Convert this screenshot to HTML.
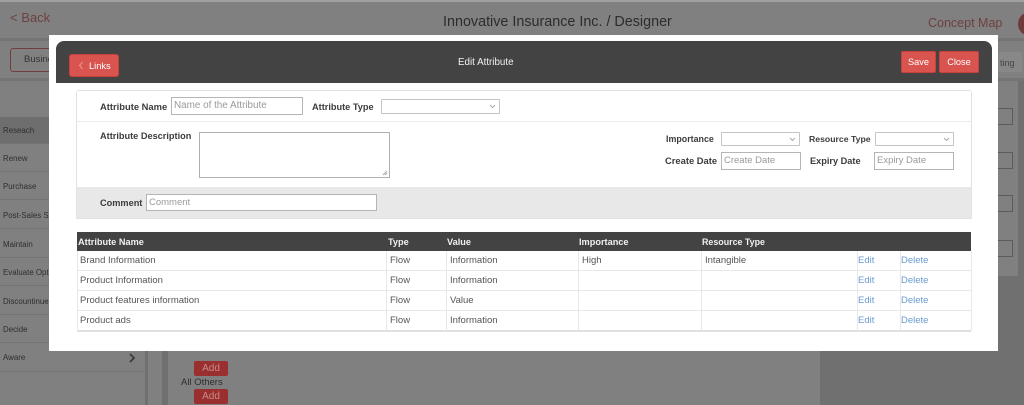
<!DOCTYPE html>
<html><head><meta charset="utf-8"><style>
html,body{margin:0;padding:0;width:1024px;height:405px;overflow:hidden;background:#808080}
body{position:relative;font-family:"Liberation Sans",sans-serif;color:#444}
div,span,a{position:absolute;box-sizing:border-box;white-space:nowrap}
.t{font-size:9.5px;line-height:12px;color:#555}
.l{font-size:9.2px;line-height:12px;font-weight:bold;color:#3c3c3c}
.h{font-size:9.2px;line-height:12px;font-weight:bold;color:#f0f0f0}
.e{font-size:9.5px;line-height:12px;color:#6a9bd0}
.i{background:#fff;border:1px solid #b5b5b5;font-size:9.5px;line-height:15px;color:#9a9a9a;padding-left:2px}
.s{background:#fff;border:1px solid #c4c4c4;border-radius:1px}
.s svg{position:absolute;right:3px;top:4px}
.v{background:#e8e8e8;width:1px}
.r{background:#e8e8e8;height:1px;left:77px;width:894px}
.m{font-size:7.9px;line-height:12px;color:#2e2e2e;left:3px}
.sl{left:0;width:145px;height:1px;background:#747474}
.bx{left:998px;width:15px;height:17px;border:1px solid #5c5c5c;background:#808080;border-left:0}
.ad{left:194px;width:34px;height:15px;background:#9a2f2f;border-radius:2px;color:#c98a8a;font-size:10px;line-height:15px;text-align:center}
</style></head><body>
<div style="left:0;top:0;width:1024px;height:2px;background:#a0a0a0"></div>
<div style="left:0;top:38px;width:1024px;height:3px;background:#747474"></div>
<div style="left:0;top:78px;width:1024px;height:3px;background:#747474"></div>
<div style="left:0;top:117px;width:145px;height:26px;background:#6e6e6e"></div>
<div style="left:145px;top:81px;width:3px;height:324px;background:#707070"></div>
<div style="left:162px;top:81px;width:6px;height:324px;background:#707070"></div>
<div style="left:820px;top:351px;width:204px;height:54px;background:#707070"></div>
<div style="left:998px;top:276px;width:26px;height:75px;background:#707070"></div>
<div style="left:1018px;top:81px;width:6px;height:195px;background:#707070"></div>
<div style="left:998px;top:52px;width:24px;height:20px;background:#888"></div>

<span style="left:10px;top:9px;font-size:13px;line-height:17px;color:#6e3f3f">&lt; Back</span>
<span style="left:443px;top:13px;font-size:14.35px;line-height:18px;color:#2c2c2c">Innovative Insurance Inc. / Designer</span>
<span style="left:928px;top:15px;font-size:12.5px;line-height:16px;color:#6e3f3f">Concept Map</span>
<div style="left:1018px;top:12px;width:24px;height:24px;border-radius:50%;background:#6e3a3a"></div>
<div style="left:10px;top:48px;width:50px;height:24px;border:1px solid #6e3f3f;border-radius:3px"></div>
<span style="left:24px;top:54px;font-size:9.5px;line-height:12px;color:#333">Business</span>
<span style="left:1000px;top:57px;font-size:9px;line-height:12px;color:#444">ting</span>

<span class="m" style="top:125px">Reseach</span><span class="m" style="top:153px">Renew</span>
<span class="m" style="top:181px">Purchase</span><span class="m" style="top:210px">Post-Sales Support</span>
<span class="m" style="top:239px">Maintain</span><span class="m" style="top:267px">Evaluate Options</span>
<span class="m" style="top:296px">Discountinue</span><span class="m" style="top:324px">Decide</span>
<span class="m" style="top:352px">Aware</span>
<div class="sl" style="top:143px"></div><div class="sl" style="top:171px"></div><div class="sl" style="top:199px"></div><div class="sl" style="top:228px"></div><div class="sl" style="top:257px"></div><div class="sl" style="top:285px"></div><div class="sl" style="top:314px"></div><div class="sl" style="top:342px"></div><div class="sl" style="top:371px"></div>
<svg style="position:absolute;left:128px;top:353px" width="8" height="10"><path d="M2 1l4 4-4 4" fill="none" stroke="#3a3a3a" stroke-width="1.8"/></svg>

<div class="bx" style="top:108px"></div><div class="bx" style="top:152px"></div><div class="bx" style="top:195px"></div><div class="bx" style="top:240px"></div>

<span style="left:198px;top:343px;font-size:9.5px;line-height:12px;color:#333">Youtube Channel</span>
<span style="left:273px;top:343px;font-size:9.5px;line-height:12px;font-weight:bold;color:#8c2c2c">Edit Remove</span>
<div class="ad" style="top:361px">Add</div>
<span style="left:181px;top:376px;font-size:9.5px;line-height:14px;color:#2e2e2e">All Others</span>
<div class="ad" style="top:389px">Add</div>

<!-- modal -->
<div style="left:49px;top:35px;width:949px;height:316px;background:#fff"></div>
<div style="left:56px;top:41px;width:936px;height:42px;background:#434343;border-radius:8px 8px 0 0"></div>
<div style="left:69px;top:54px;width:50px;height:23px;background:#d9534f;border:1px solid #c9403c;border-radius:3px"></div>
<svg style="position:absolute;left:78px;top:61px" width="6" height="9"><path d="M4.5 1l-3 3.5 3 3.5" fill="none" stroke="#ee9a97" stroke-width="1"/></svg>
<span style="left:89px;top:60px;font-size:9.3px;line-height:12px;color:#fff">Links</span>
<span style="left:458px;top:57px;font-size:9.8px;line-height:12px;color:#f2f2f2">Edit Attribute</span>
<div style="left:901px;top:51px;width:35px;height:22px;background:#d9534f;border:1px solid #c9403c;border-radius:2px;color:#fff;font-size:9.2px;line-height:21px;text-align:center">Save</div>
<div style="left:939px;top:51px;width:40px;height:22px;background:#d9534f;border:1px solid #c9403c;border-radius:2px;color:#fff;font-size:9.2px;line-height:21px;text-align:center">Close</div>

<div style="left:76px;top:90px;width:896px;height:129px;border:1px solid #e2e2e2;border-radius:3px 3px 0 0"></div>
<div style="left:77px;top:121px;width:894px;height:1px;background:#ececec"></div>
<div style="left:77px;top:187px;width:894px;height:31px;background:#e8e8e8"></div>

<span class="l" style="left:100px;top:101px;font-size:9.4px">Attribute Name</span>
<div class="i" style="left:171px;top:97px;width:132px;height:18px;font-size:9.9px;line-height:16px">Name of the Attribute</div>
<span class="l" style="left:312px;top:101px">Attribute Type</span>
<div class="s" style="left:381px;top:99px;width:119px;height:15px"><svg width="7" height="5"><path d="M1 1l2.5 2.5L6 1" fill="none" stroke="#aaa"/></svg></div>
<span class="l" style="left:100px;top:130px">Attribute Description</span>
<div style="left:199px;top:132px;width:191px;height:46px;border:1px solid #b0b0b0;background:#fff"><svg style="position:absolute;right:1px;bottom:1px" width="6" height="6"><path d="M5 1L1 5M5 3L3 5" stroke="#aaa" fill="none"/></svg></div>
<span class="l" style="left:666px;top:133px;font-size:8.9px">Importance</span>
<div class="s" style="left:721px;top:132px;width:79px;height:14px"><svg width="7" height="5"><path d="M1 1l2.5 2.5L6 1" fill="none" stroke="#aaa"/></svg></div>
<span class="l" style="left:809px;top:133px;font-size:8.7px">Resource Type</span>
<div class="s" style="left:875px;top:132px;width:79px;height:14px"><svg width="7" height="5"><path d="M1 1l2.5 2.5L6 1" fill="none" stroke="#aaa"/></svg></div>
<span class="l" style="left:665px;top:155px;font-size:9.4px">Create Date</span>
<div class="i" style="left:721px;top:152px;width:80px;height:18px;line-height:16px">Create Date</div>
<span class="l" style="left:810px;top:155px">Expiry Date</span>
<div class="i" style="left:874px;top:152px;width:80px;height:18px;line-height:16px">Expiry Date</div>
<span class="l" style="left:100px;top:197px">Comment</span>
<div class="i" style="left:146px;top:194px;width:231px;height:17px">Comment</div>

<!-- table -->
<div style="left:77px;top:232px;width:894px;height:19px;background:#434343"></div>
<span class="h" style="left:78px;top:236px">Attribute Name</span>
<span class="h" style="left:388px;top:236px">Type</span>
<span class="h" style="left:447px;top:236px">Value</span>
<span class="h" style="left:579px;top:236px">Importance</span>
<span class="h" style="left:702px;top:236px;font-size:8.9px">Resource Type</span>
<div class="r" style="top:270px"></div><div class="r" style="top:290px"></div><div class="r" style="top:310px"></div>
<div class="r" style="top:330px;height:2px;background:#e0e0e0"></div>
<div class="v" style="left:77px;top:251px;height:80px"></div>
<div class="v" style="left:386px;top:251px;height:80px"></div>
<div class="v" style="left:446px;top:251px;height:80px"></div>
<div class="v" style="left:578px;top:251px;height:80px"></div>
<div class="v" style="left:701px;top:251px;height:80px"></div>
<div class="v" style="left:857px;top:251px;height:80px"></div>
<div class="v" style="left:900px;top:251px;height:80px"></div>
<div class="v" style="left:971px;top:251px;height:80px"></div>

<span class="t" style="left:80px;top:255px">Brand Information</span><span class="t" style="left:390px;top:255px">Flow</span><span class="t" style="left:450px;top:255px">Information</span><span class="t" style="left:582px;top:255px">High</span><span class="t" style="left:705px;top:255px">Intangible</span><span class="e" style="left:858px;top:255px">Edit</span><span class="e" style="left:901px;top:255px">Delete</span>
<span class="t" style="left:80px;top:275px">Product Information</span><span class="t" style="left:390px;top:275px">Flow</span><span class="t" style="left:450px;top:275px">Information</span><span class="e" style="left:858px;top:275px">Edit</span><span class="e" style="left:901px;top:275px">Delete</span>
<span class="t" style="left:80px;top:295px">Product features information</span><span class="t" style="left:390px;top:295px">Flow</span><span class="t" style="left:450px;top:295px">Value</span><span class="e" style="left:858px;top:295px">Edit</span><span class="e" style="left:901px;top:295px">Delete</span>
<span class="t" style="left:80px;top:315px">Product ads</span><span class="t" style="left:390px;top:315px">Flow</span><span class="t" style="left:450px;top:315px">Information</span><span class="e" style="left:858px;top:315px">Edit</span><span class="e" style="left:901px;top:315px">Delete</span>
</body></html>
